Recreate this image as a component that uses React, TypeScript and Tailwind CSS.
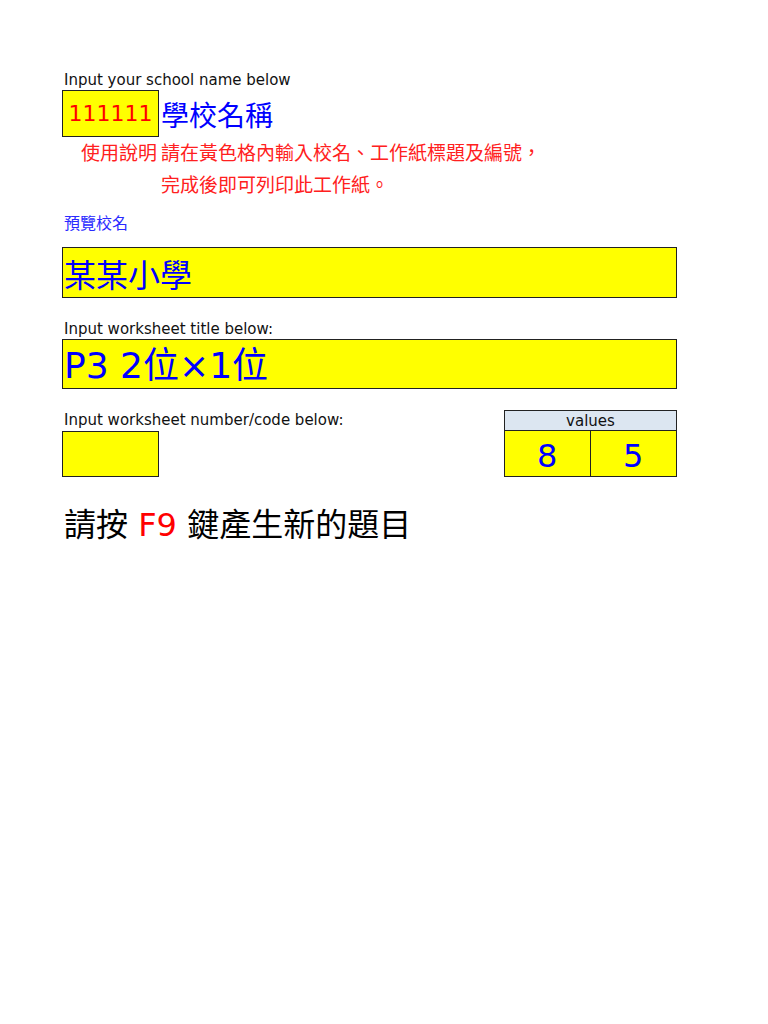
const font = "font-['DejaVu_Sans','Noto_Sans_CJK_TC',sans-serif]";

export default function App() {
  return (
    <div className={`min-h-screen bg-white text-black ${font}`}>
      <div className="pt-[70px] pl-[62px] w-[677px] flex flex-col">
        {/* school name */}
        <div className="h-[20px] flex items-center pl-[2px] text-[15px] leading-[18px] text-[#111]">
          Input your school name below
        </div>
        <div className="h-[47px] flex items-center">
          <div className="w-[97px] h-[47px] border border-[#222] bg-[#ffff00] flex items-center justify-center text-[22px] text-[#ff0000]">
            111111
          </div>
          <div className="ml-[2px] pt-[6px] text-[28px] leading-[34px] text-[#0000ff]">學校名稱</div>
        </div>

        {/* notes */}
        <div className="h-[32px] flex items-center text-[19px] leading-[24px] text-[#ff2020]">
          <div className="w-[97px] flex justify-end pr-[2px] whitespace-nowrap">使用說明</div>
          <div className="ml-[2px] whitespace-nowrap">請在黃色格內輸入校名、工作紙標題及編號，</div>
        </div>
        <div className="h-[32px] flex items-center text-[19px] leading-[24px] text-[#ff2020]">
          <div className="w-[97px]" />
          <div className="ml-[2px] whitespace-nowrap">完成後即可列印此工作紙。</div>
        </div>

        <div className="h-[46px] flex items-end pb-[14px] pl-[2px] text-[16px] leading-[18px] text-[#2a2aff]">
          預覽校名
        </div>
        <div className="h-[51px] border border-[#222] bg-[#ffff00] flex items-end pl-[1px] pb-[1px] text-[32px] leading-[40px] text-[#0000ff]">
          某某小學
        </div>

        {/* title */}
        <div className="h-[41px] flex items-end pb-[1px] pl-[2px] text-[15px] leading-[18px] text-[#111]">
          Input worksheet title below:
        </div>
        <div className="h-[50px] border border-[#222] bg-[#ffff00] flex items-center pl-[1px] pt-[4px] text-[36px] leading-[44px] text-[#0000ff]">
          P3 2位×1位
        </div>

        {/* number / values */}
        <div className="h-[42px] flex items-end justify-between">
          <div className="pb-[2px] pl-[2px] text-[15px] leading-[18px] text-[#111]">
            Input worksheet number/code below:
          </div>
          <div className="w-[173px] h-[21px] border border-[#222] bg-[#dce6f1] flex items-center justify-center text-[15px] leading-[18px] text-[#111]">
            values
          </div>
        </div>
        <div className="h-[46px] flex justify-between">
          <div className="w-[97px] h-[46px] border border-[#222] bg-[#ffff00]" />
          <div className="w-[173px] h-[46px] grid grid-cols-2 border border-t-0 border-[#222] bg-[#ffff00]">
            <div className="flex items-center justify-center border-r border-[#222] pt-[4px] text-[32px] leading-[40px] text-[#0000ff]">8</div>
            <div className="flex items-center justify-center pt-[4px] text-[32px] leading-[40px] text-[#0000ff]">5</div>
          </div>
        </div>

        {/* instruction */}
        <div className="mt-[28px] pl-[2px] text-[32px] leading-[40px] text-black whitespace-nowrap">
          請按 <span className="text-[#ff0000]">F9</span> 鍵產生新的題目
        </div>
      </div>
    </div>
  );
}
